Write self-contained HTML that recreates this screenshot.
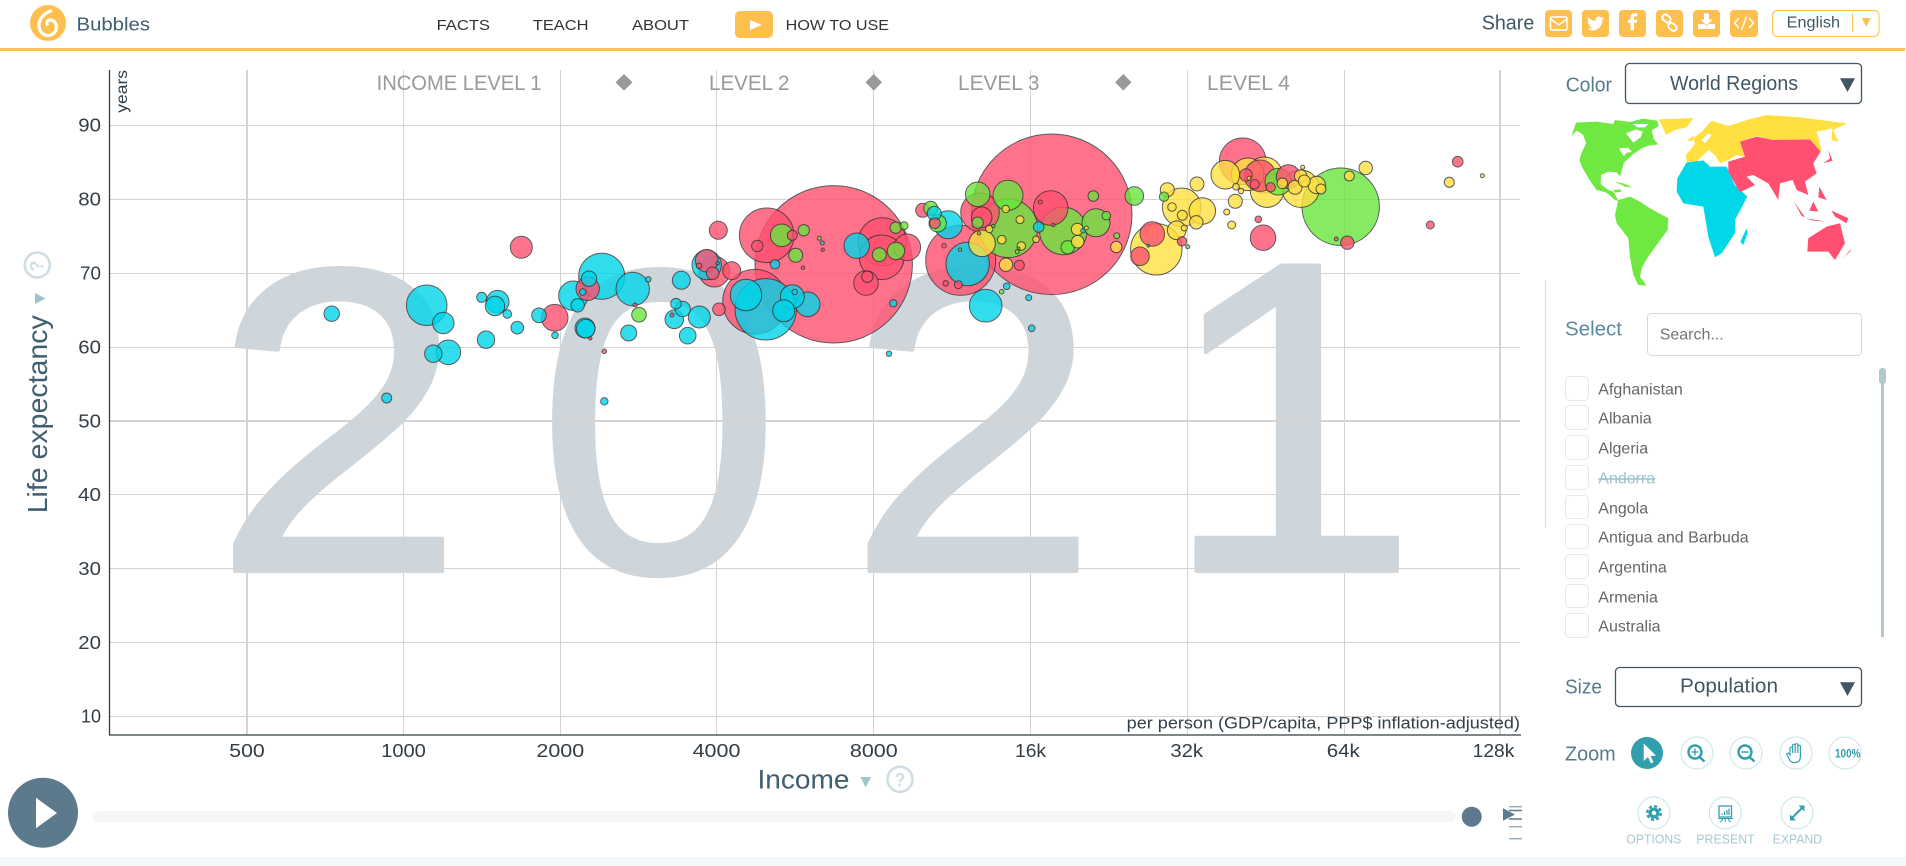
<!DOCTYPE html>
<html lang="en"><head><meta charset="utf-8"><title>Bubbles</title>
<style>
html,body{margin:0;padding:0;background:#fff;width:1906px;height:866px;overflow:hidden}
svg{display:block;font-family:"Liberation Sans",sans-serif}
.gl{stroke:#d3d3d3;stroke-width:1;shape-rendering:crispEdges}
.tk{font-size:18px;fill:#333d45}
.p{fill:#ff5070}.c{fill:#00d5e9}.g{fill:#68e63c}.y{fill:#ffe040}
#b circle{opacity:.8;stroke:#333;stroke-width:1}
.lv{font-size:21px;fill:#999}
.nav{font-size:15px;fill:#333}
.lb{font-size:20px;fill:#567b8e}
.it{font-size:16px;fill:#666}
.cb{fill:#fff;stroke:#e2e9ed;stroke-width:1}
.btn{fill:#fff;stroke:#c5e4ea;stroke-width:1}
.bl{font-size:13px;fill:#a6c8d2}
.ti{fill:none;stroke:#329fad;stroke-width:2.4}
.sh{fill:#fdc04f}
</style></head><body>
<svg width="1906" height="866" viewBox="0 0 1906 866" xmlns="http://www.w3.org/2000/svg">
<rect width="1906" height="866" fill="#fff"/>
<rect y="857" width="1906" height="9" fill="#f3f7fa"/>

<!-- header -->
<circle cx="48" cy="23" r="18" fill="#fdc04f"/>
<path d="M52 10.5C44 13 39 19 39 25.5C39 32 44 35.5 48 35.5C53 35.5 56.5 31.5 56.5 27C56.5 23 53.5 20 50.5 20C47.5 20 46 23 47.5 25.5" fill="none" stroke="#fff" stroke-width="3.200"/>
<text x="76.500" y="30.500" font-size="18" fill="#3f5e70" textLength="73.500" lengthAdjust="spacingAndGlyphs">Bubbles</text>
<text class="nav" x="436.600" y="30" textLength="53.400" lengthAdjust="spacingAndGlyphs">FACTS</text>
<text class="nav" x="532.800" y="30" textLength="55.700" lengthAdjust="spacingAndGlyphs">TEACH</text>
<text class="nav" x="632" y="30" textLength="57" lengthAdjust="spacingAndGlyphs">ABOUT</text>
<rect x="735" y="11" width="38" height="27" rx="5" class="sh"/>
<path d="M750 20L762 25L750 30Z" fill="#fff"/>
<text class="nav" x="785.700" y="30" textLength="103.300" lengthAdjust="spacingAndGlyphs">HOW TO USE</text>
<rect y="48" width="1905" height="3" fill="#fdc04f"/>

<text x="1481.700" y="29.300" font-size="20" fill="#3f5764" textLength="52.600" lengthAdjust="spacingAndGlyphs">Share</text>
<rect x="1545" y="10" width="27" height="27" rx="4" class="sh"/>
<rect x="1550.500" y="17" width="16.500" height="13" rx="1.500" fill="none" stroke="#fff" stroke-width="1.500"/>
<path d="M1550.500 19L1558.700 25L1567 19" fill="none" stroke="#fff" stroke-width="1.500"/>
<rect x="1582" y="10" width="27" height="27" rx="4" class="sh"/>
<path transform="translate(1587 15) scale(.71)" fill="#fff" d="M23.953 4.57a10 10 0 01-2.825.775 4.958 4.958 0 002.163-2.723c-.951.555-2.005.959-3.127 1.184a4.92 4.92 0 00-8.384 4.482C7.69 8.095 4.067 6.13 1.64 3.162a4.822 4.822 0 00-.666 2.475c0 1.71.87 3.213 2.188 4.096a4.904 4.904 0 01-2.228-.616v.06a4.923 4.923 0 003.946 4.827 4.996 4.996 0 01-2.212.085 4.936 4.936 0 004.604 3.417 9.867 9.867 0 01-6.102 2.105c-.39 0-.779-.023-1.17-.067a13.995 13.995 0 007.557 2.209c9.053 0 13.998-7.496 13.998-13.985 0-.21 0-.42-.015-.63A9.935 9.935 0 0024 4.59z"/>
<rect x="1619" y="10" width="27" height="27" rx="4" class="sh"/>
<path transform="translate(0 -1.800)" fill="#fff" d="M1634 32V24.500h2.700l.5-3h-3.200v-2c0-1 .4-1.500 1.600-1.500h1.700v-3h-2.500c-2.800 0-4.300 1.700-4.300 4.300v2.200h-2.500v3h2.500V32z"/>
<rect x="1656" y="10" width="27" height="27" rx="4" class="sh"/>
<g fill="none" stroke="#fff" stroke-width="2"><rect x="1662" y="15.500" width="9" height="6" rx="3" transform="rotate(40 1666.500 18.500)"/><rect x="1668" y="24" width="9" height="6" rx="3" transform="rotate(40 1672.500 27)"/></g>
<rect x="1693" y="10" width="27" height="27" rx="4" class="sh"/>
<path d="M1704 13.500h5v6h3.500l-6 6-6-6h3.500z" fill="#fff"/><path d="M1698 24h6l2.500 2.500 2.500-2.500h6v5h-17z" fill="#fff"/>
<rect x="1730" y="10" width="28" height="27" rx="4" class="sh"/>
<path d="M1739 18l-4.500 5 4.500 5M1749 18l4.500 5-4.500 5M1746.500 16.500l-5 13.500" fill="none" stroke="#fff" stroke-width="1.400"/>
<rect x="1772.500" y="10.500" width="106.500" height="26" rx="5" fill="#fff" stroke="#fdc04f" stroke-width="1"/>
<text x="1786.700" y="27.300" font-size="16" fill="#3f5764" textLength="53.300" lengthAdjust="spacingAndGlyphs">English</text>
<rect x="1852" y="13.500" width="1" height="18" fill="#fdc04f"/>
<path d="M1861.700 18H1870.700L1866.200 26.700Z" fill="#fdc04f"/>

<!-- year -->
<g font-size="434" fill="#ced6db" stroke="#ced6db" stroke-width="4" stroke-linejoin="round">
<text transform="translate(212.300 571) scale(1.046 1)">2</text>
<text transform="translate(537 572) scale(1.01 1)">0</text>
<text transform="translate(846.800 571) scale(1.046 1)">2</text>
<text transform="translate(1161.200 571) scale(1.07 1.023)">1</text>
</g>

<!-- grid -->
<g class="gl">
<line x1="247" y1="70" x2="247" y2="735" stroke-width="2"/><line x1="403.500" y1="70" x2="403.500" y2="735"/><line x1="560.500" y1="70" x2="560.500" y2="735"/><line x1="716.500" y1="70" x2="716.500" y2="735"/><line x1="873.500" y1="70" x2="873.500" y2="735"/><line x1="1030.500" y1="70" x2="1030.500" y2="735"/><line x1="1187.500" y1="70" x2="1187.500" y2="735"/><line x1="1344.500" y1="70" x2="1344.500" y2="735"/><line x1="1500" y1="70" x2="1500" y2="735" stroke-width="2"/>
<line x1="110" y1="125.500" x2="1520" y2="125.500"/><line x1="110" y1="199.500" x2="1520" y2="199.500"/><line x1="110" y1="273.500" x2="1520" y2="273.500"/><line x1="110" y1="347.500" x2="1520" y2="347.500"/><line x1="110" y1="421" x2="1520" y2="421" stroke-width="2"/><line x1="110" y1="494.500" x2="1520" y2="494.500"/><line x1="110" y1="568.500" x2="1520" y2="568.500"/><line x1="110" y1="642.500" x2="1520" y2="642.500"/><line x1="110" y1="716.500" x2="1520" y2="716.500"/>
</g>
<path d="M109.500 70V735H1521" fill="none" stroke="#333d45" stroke-width="1.300"/>

<!-- income levels -->
<text class="lv" x="376.600" y="90" textLength="164.900" lengthAdjust="spacingAndGlyphs">INCOME LEVEL 1</text>
<text class="lv" x="709" y="90" textLength="80.500" lengthAdjust="spacingAndGlyphs">LEVEL 2</text>
<text class="lv" x="958" y="90" textLength="81.500" lengthAdjust="spacingAndGlyphs">LEVEL 3</text>
<text class="lv" x="1207" y="90" textLength="83" lengthAdjust="spacingAndGlyphs">LEVEL 4</text>
<path d="M624 74L632.500 82.300L624 90.600L615.500 82.300ZM873.800 74L882 82.300L873.800 90.600L865.500 82.300ZM1123.300 74L1131.500 82.300L1123.300 90.600L1115 82.300Z" fill="#999"/>

<!-- ticks -->
<g class="tk" text-anchor="end">
<text x="101" y="131.700" textLength="22.700" lengthAdjust="spacingAndGlyphs">90</text><text x="101" y="205.700" textLength="22.700" lengthAdjust="spacingAndGlyphs">80</text><text x="101" y="279.700" textLength="21" lengthAdjust="spacingAndGlyphs">70</text><text x="101" y="353.700" textLength="22.700" lengthAdjust="spacingAndGlyphs">60</text><text x="101" y="427.400" textLength="22.700" lengthAdjust="spacingAndGlyphs">50</text><text x="101" y="501" textLength="23" lengthAdjust="spacingAndGlyphs">40</text><text x="101" y="575" textLength="22.700" lengthAdjust="spacingAndGlyphs">30</text><text x="101" y="649" textLength="22.700" lengthAdjust="spacingAndGlyphs">20</text><text x="101" y="722.500" textLength="20" lengthAdjust="spacingAndGlyphs">10</text>
</g>
<g class="tk" text-anchor="middle">
<text x="247" y="757" textLength="35.500" lengthAdjust="spacingAndGlyphs">500</text><text x="403.500" y="757" textLength="44.700" lengthAdjust="spacingAndGlyphs">1000</text><text x="560.300" y="757" textLength="47.800" lengthAdjust="spacingAndGlyphs">2000</text><text x="716.500" y="757" textLength="47.800" lengthAdjust="spacingAndGlyphs">4000</text><text x="873.800" y="757" textLength="47.800" lengthAdjust="spacingAndGlyphs">8000</text><text x="1030.500" y="757" textLength="31" lengthAdjust="spacingAndGlyphs">16k</text><text x="1186.700" y="757" textLength="32.700" lengthAdjust="spacingAndGlyphs">32k</text><text x="1343.300" y="757" textLength="33" lengthAdjust="spacingAndGlyphs">64k</text><text x="1493.500" y="757" textLength="41.700" lengthAdjust="spacingAndGlyphs">128k</text>
</g>
<text x="1126.700" y="728.300" font-size="17" fill="#333d45" textLength="393.300" lengthAdjust="spacingAndGlyphs">per person (GDP/capita, PPP$ inflation-adjusted)</text>
<text transform="translate(127 112.700) rotate(-90)" font-size="16" fill="#333d45" textLength="42.700" lengthAdjust="spacingAndGlyphs">years</text>

<text transform="translate(47 513.300) rotate(-90)" font-size="28" fill="#3f5e70" textLength="198" lengthAdjust="spacingAndGlyphs">Life expectancy</text>
<path d="M35 293L45.700 298.500L35 304Z" fill="#9fc4cc"/>
<circle cx="37.300" cy="265" r="12.500" fill="none" stroke="#d0dde3" stroke-width="2.600"/>
<text transform="translate(43 271.500) rotate(-90)" font-size="18" font-weight="bold" fill="#d0dde3" text-anchor="start">?</text>

<text x="757.500" y="788.300" font-size="27" fill="#3f5e70" textLength="92" lengthAdjust="spacingAndGlyphs">Income</text>
<path d="M860.400 777H871L865.700 787.500Z" fill="#9fc4cc"/>
<circle cx="900" cy="779.300" r="12.500" fill="none" stroke="#d0dde3" stroke-width="2.600"/>
<text x="900" y="786" font-size="18" font-weight="bold" fill="#d0dde3" text-anchor="middle">?</text>

<!-- bubbles -->
<g id="b">
<circle class="p" cx="1051.700" cy="214.300" r="80.300"/>
<circle class="p" cx="833.700" cy="264.300" r="78.700"/>
<circle class="g" cx="1340.700" cy="206.700" r="38.700"/>
<circle class="p" cx="960.700" cy="260.300" r="35"/>
<circle class="p" cx="755" cy="301.700" r="32.300"/>
<circle class="c" cx="765.700" cy="309.300" r="30.700"/>
<circle class="g" cx="1008.300" cy="228.300" r="29.300"/>
<circle class="p" cx="766.700" cy="235.300" r="27.300"/>
<circle class="y" cx="1156.300" cy="249.300" r="25.700"/>
<circle class="p" cx="882.300" cy="241.700" r="24"/>
<circle class="g" cx="1063.300" cy="231" r="23.700"/>
<circle class="p" cx="1242.700" cy="161.300" r="23.300"/>
<circle class="c" cx="601.700" cy="276.300" r="23"/>
<circle class="p" cx="881.700" cy="257.300" r="22.300"/>
<circle class="c" cx="967.700" cy="264" r="21.700"/>
<circle class="c" cx="426.700" cy="305.300" r="20.300"/>
<circle class="p" cx="980" cy="212.300" r="19.300"/>
<circle class="y" cx="1181.700" cy="207.300" r="19.300"/>
<circle class="y" cx="1300.700" cy="188.700" r="18.700"/>
<circle class="y" cx="1264.300" cy="175" r="18"/>
<circle class="p" cx="1050.700" cy="208" r="17.300"/>
<circle class="c" cx="632.700" cy="289" r="16.700"/>
<circle class="y" cx="1267" cy="190.700" r="16.700"/>
<circle class="c" cx="985.700" cy="305.700" r="16.300"/>
<circle class="y" cx="1247.700" cy="174.300" r="16.300"/>
<circle class="c" cx="746" cy="295" r="15.700"/>
<circle class="p" cx="1260" cy="175.700" r="15.700"/>
<circle class="p" cx="714.300" cy="271.700" r="15.300"/>
<circle class="g" cx="1008" cy="195.300" r="15"/>
<circle class="c" cx="573.300" cy="295.700" r="14.700"/>
<circle class="c" cx="706.700" cy="265" r="14.700"/>
<circle class="y" cx="1225.300" cy="174.700" r="14.300"/>
<circle class="c" cx="948.300" cy="224.700" r="14"/>
<circle class="g" cx="1096" cy="222.700" r="14"/>
<circle class="p" cx="907.300" cy="247.300" r="13.300"/>
<circle class="p" cx="554.700" cy="317.700" r="13.300"/>
<circle class="y" cx="982" cy="243.300" r="13.300"/>
<circle class="y" cx="1202.300" cy="211" r="13.300"/>
<circle class="g" cx="1278.300" cy="181.700" r="13.300"/>
<circle class="c" cx="856.700" cy="245.700" r="12.700"/>
<circle class="p" cx="1263" cy="237.700" r="12.700"/>
<circle class="c" cx="448.300" cy="352.300" r="12.300"/>
<circle class="c" cx="807.700" cy="304.300" r="12.300"/>
<circle class="p" cx="866" cy="283" r="12.300"/>
<circle class="g" cx="977.700" cy="194.300" r="12.300"/>
<circle class="p" cx="1152.300" cy="234" r="12.300"/>
<circle class="c" cx="792.300" cy="296.700" r="12"/>
<circle class="p" cx="1288.300" cy="176.700" r="12"/>
<circle class="p" cx="587.700" cy="288.700" r="11.700"/>
<circle class="c" cx="497.700" cy="301.700" r="11.300"/>
<circle class="p" cx="706.700" cy="260.700" r="11.300"/>
<circle class="g" cx="781.700" cy="235.300" r="11.300"/>
<circle class="p" cx="521.300" cy="247.300" r="11"/>
<circle class="c" cx="699.300" cy="317" r="11"/>
<circle class="c" cx="783.700" cy="310.700" r="11"/>
<circle class="c" cx="443.300" cy="323" r="10.700"/>
<circle class="p" cx="981.700" cy="217.300" r="10.300"/>
<circle class="c" cx="585" cy="328" r="10"/>
<circle class="c" cx="495" cy="306" r="9.700"/>
<circle class="c" cx="585.700" cy="328.700" r="9.300"/>
<circle class="c" cx="674.300" cy="319.300" r="9.300"/>
<circle class="y" cx="1176.700" cy="230.300" r="9.300"/>
<circle class="p" cx="1140" cy="256.300" r="9.300"/>
<circle class="g" cx="1134.300" cy="196" r="9.300"/>
<circle class="c" cx="681.300" cy="280.300" r="9"/>
<circle class="p" cx="718.300" cy="230.300" r="9"/>
<circle class="p" cx="731.700" cy="270.700" r="9"/>
<circle class="c" cx="433.300" cy="353.700" r="8.700"/>
<circle class="c" cx="486" cy="339.700" r="8.700"/>
<circle class="g" cx="896" cy="251" r="8.700"/>
<circle class="g" cx="937.700" cy="223.300" r="8.700"/>
<circle class="y" cx="1316.700" cy="185" r="8.700"/>
<circle class="c" cx="687.700" cy="335.700" r="8.300"/>
<circle class="c" cx="628.700" cy="333" r="8"/>
<circle class="c" cx="331.700" cy="313.700" r="7.700"/>
<circle class="c" cx="589" cy="278.700" r="7.700"/>
<circle class="c" cx="682.700" cy="309" r="7.700"/>
<circle class="c" cx="539" cy="315.300" r="7.300"/>
<circle class="g" cx="639" cy="314.700" r="7.300"/>
<circle class="p" cx="922.700" cy="210.300" r="7"/>
<circle class="g" cx="930.700" cy="208.300" r="7"/>
<circle class="c" cx="934.300" cy="213.300" r="7"/>
<circle class="g" cx="795.700" cy="255.300" r="7"/>
<circle class="g" cx="879.300" cy="254.700" r="7"/>
<circle class="y" cx="1167.300" cy="189.700" r="7"/>
<circle class="y" cx="1197" cy="184" r="7"/>
<circle class="y" cx="1295" cy="187.300" r="7"/>
<circle class="y" cx="1235.300" cy="201.300" r="7"/>
<circle class="y" cx="1006" cy="264.700" r="6.700"/>
<circle class="c" cx="577.700" cy="305.300" r="6.700"/>
<circle class="g" cx="1067.700" cy="247.300" r="6.700"/>
<circle class="y" cx="1196.300" cy="222.300" r="6.700"/>
<circle class="y" cx="1365.700" cy="168" r="6.700"/>
<circle class="p" cx="1347.300" cy="242.700" r="6.700"/>
<circle class="c" cx="517.300" cy="327.700" r="6.300"/>
<circle class="p" cx="719" cy="309.300" r="6.300"/>
<circle class="p" cx="712.700" cy="273.300" r="6.300"/>
<circle class="p" cx="1246" cy="175" r="6.300"/>
<circle class="y" cx="1077.700" cy="241.700" r="6.300"/>
<circle class="y" cx="1300.700" cy="176" r="6.300"/>
<circle class="y" cx="1077.300" cy="229.300" r="6"/>
<circle class="y" cx="1304.300" cy="181" r="6"/>
<circle class="g" cx="803.700" cy="230.300" r="5.700"/>
<circle class="p" cx="757.300" cy="246" r="5.700"/>
<circle class="g" cx="895.700" cy="227.700" r="5.700"/>
<circle class="p" cx="867.300" cy="276.700" r="5.700"/>
<circle class="g" cx="977.700" cy="222.700" r="5.700"/>
<circle class="y" cx="1116.300" cy="247" r="5.700"/>
<circle class="c" cx="676" cy="303.700" r="5.300"/>
<circle class="p" cx="935" cy="223.300" r="5.300"/>
<circle class="c" cx="1038.700" cy="227" r="5.300"/>
<circle class="g" cx="1093.300" cy="196" r="5.300"/>
<circle class="y" cx="1282.300" cy="183.300" r="5.300"/>
<circle class="p" cx="1457.700" cy="161.700" r="5.300"/>
<circle class="c" cx="386.700" cy="398" r="5"/>
<circle class="c" cx="481.700" cy="297.300" r="5"/>
<circle class="p" cx="792.300" cy="235.300" r="5"/>
<circle class="p" cx="1019.300" cy="265.300" r="5"/>
<circle class="y" cx="1182.300" cy="215.300" r="5"/>
<circle class="y" cx="1321" cy="189" r="5"/>
<circle class="y" cx="1349.300" cy="176" r="5"/>
<circle class="y" cx="1449.300" cy="182.300" r="5"/>
<circle class="c" cx="775" cy="264.300" r="4.700"/>
<circle class="g" cx="1164" cy="196.700" r="4.700"/>
<circle class="p" cx="1182" cy="241.300" r="4.700"/>
<circle class="p" cx="1254.700" cy="184.300" r="4.700"/>
<circle class="p" cx="1270.700" cy="187.300" r="4.700"/>
<circle class="c" cx="507.300" cy="314" r="4.300"/>
<circle class="y" cx="1001.700" cy="239.700" r="4.300"/>
<circle class="y" cx="1021.300" cy="246" r="4.300"/>
<circle class="g" cx="1106.300" cy="215.700" r="4.300"/>
<circle class="y" cx="1172" cy="207" r="4.300"/>
<circle class="g" cx="904" cy="225.700" r="4"/>
<circle class="p" cx="958.300" cy="284.700" r="4"/>
<circle class="y" cx="1020" cy="219.700" r="4"/>
<circle class="y" cx="1231.700" cy="225" r="4"/>
<circle class="p" cx="1430.300" cy="225" r="4"/>
<circle class="c" cx="604.300" cy="401.300" r="3.700"/>
<circle class="c" cx="893.300" cy="303.300" r="3.700"/>
<circle class="y" cx="1005.700" cy="209" r="3.700"/>
<circle class="y" cx="989.300" cy="229" r="3.700"/>
<circle class="c" cx="555" cy="335.300" r="3.300"/>
<circle class="c" cx="582.700" cy="292" r="3.300"/>
<circle class="c" cx="1006.700" cy="286.300" r="3.300"/>
<circle class="c" cx="1031.700" cy="328.300" r="3.300"/>
<circle class="y" cx="1036" cy="239.300" r="3.300"/>
<circle class="y" cx="1236" cy="186.700" r="3.300"/>
<circle class="p" cx="1258.300" cy="219.300" r="3.300"/>
<circle class="c" cx="1028.700" cy="297.700" r="3"/>
<circle class="g" cx="1116.700" cy="235.700" r="3"/>
<circle class="y" cx="1184.300" cy="228" r="3"/>
<circle class="y" cx="1226.700" cy="212" r="3"/>
<circle class="c" cx="648.300" cy="279.300" r="2.700"/>
<circle class="p" cx="699" cy="265.700" r="2.700"/>
<circle class="c" cx="794.700" cy="292" r="2.700"/>
<circle class="c" cx="889" cy="353.700" r="2.700"/>
<circle class="p" cx="945.700" cy="283.300" r="2.700"/>
<circle class="y" cx="1241" cy="191" r="2.700"/>
<circle class="p" cx="604.300" cy="351.300" r="2.300"/>
<circle class="p" cx="944" cy="245.700" r="2.300"/>
<circle class="g" cx="1001.700" cy="291.700" r="2.300"/>
<circle class="c" cx="1083" cy="230.700" r="2.300"/>
<circle class="p" cx="635" cy="305" r="2"/>
<circle class="p" cx="672" cy="315" r="2"/>
<circle class="g" cx="819.300" cy="238.300" r="2"/>
<circle class="c" cx="822.300" cy="243" r="2"/>
<circle class="g" cx="1017.300" cy="251.700" r="2"/>
<circle class="p" cx="1040.300" cy="202" r="2"/>
<circle class="y" cx="1086.300" cy="228" r="2"/>
<circle class="g" cx="1187.700" cy="246.700" r="2"/>
<circle class="y" cx="1249" cy="178.300" r="2"/>
<circle class="y" cx="1302.700" cy="167.300" r="2"/>
<circle class="p" cx="1336.300" cy="239" r="2"/>
<circle class="y" cx="1482.300" cy="175.700" r="2"/>
<circle class="p" cx="590.300" cy="338.300" r="1.700"/>
<circle class="c" cx="717.700" cy="263.300" r="1.700"/>
<circle class="p" cx="803" cy="267.700" r="1.700"/>
<circle class="p" cx="822.700" cy="249.700" r="1.700"/>
<circle class="g" cx="960" cy="249.700" r="1.700"/>
<circle class="g" cx="993.300" cy="226" r="1.700"/>
<circle class="g" cx="979" cy="233.300" r="1.700"/>
<circle class="p" cx="1053.300" cy="225" r="1.700"/>
<circle class="g" cx="1018.700" cy="248.300" r="1.300"/>
<circle class="c" cx="1148.300" cy="245.700" r="1.300"/>
</g>

<!-- timeline -->
<circle cx="43" cy="812.700" r="35" fill="#5c7a8b"/>
<path d="M36 797.700L57 813L36 828.300Z" fill="#fff"/>
<rect x="92" y="811" width="1364" height="11" rx="5.500" fill="#f4f6f8"/>
<circle cx="1471.700" cy="816.700" r="13" fill="#fff"/>
<circle cx="1471.700" cy="816.700" r="10" fill="#5c7a8b"/>
<g stroke="#9fb0ba" stroke-width="1.500"><line x1="1509" y1="806.700" x2="1522" y2="806.700"/><line x1="1509" y1="810.500" x2="1522" y2="810.500" stroke="#5c7a8b"/><line x1="1509" y1="819" x2="1522" y2="819" stroke="#5c7a8b"/><line x1="1509" y1="826.700" x2="1522" y2="826.700"/><line x1="1509" y1="838.700" x2="1522" y2="838.700"/></g>
<path d="M1503 808.300L1515 814.500L1503 820.700Z" fill="#5c7a8b"/>

<!-- color -->
<text class="lb" x="1565.700" y="91.700" textLength="46.300" lengthAdjust="spacingAndGlyphs">Color</text>
<rect x="1625.500" y="63.500" width="236" height="40" rx="4" fill="#fff" stroke="#3f5764" stroke-width="1.300"/>
<text x="1670" y="90" font-size="20" fill="#3f5764" textLength="128" lengthAdjust="spacingAndGlyphs">World Regions</text>
<path d="M1840 78.300H1855L1847.500 92Z" fill="#3f5764"/>

<!-- world map -->
<g transform="translate(1400 0) scale(.3333)">
<path fill="#6fe841" d="M515 408L528 368L590 365L640 372L645 360L690 366L728 356L772 362L776 378L755 392L762 418L775 433L745 437L725 445L700 462L672 488L660 530L650 517L625 515L603 525L602 552L625 570L640 575L656 603L645 600L620 578L590 570L572 545L548 505L538 480L545 458L558 430L550 405L530 392Z"/>
<path fill="#fff" d="M678 400L708 388L728 395L722 412L700 428ZM700 372L745 372L735 382L712 382ZM658 445L685 443L695 456L680 458L672 468L665 460Z"/>
<path fill="#6fe841" d="M645 545L670 550L698 562L675 560ZM640 570L660 568L665 575L645 578ZM655 600L690 590L720 605L750 625L805 655L803 690L770 735L745 770L727 800L720 830L740 857L715 855L700 825L690 770L685 715L650 670L645 645Z"/>
<path fill="#ffe040" d="M775 358L880 354L860 382L825 390L798 405L785 375ZM860 485L858 465L885 432L880 415L905 395L935 362L985 378L1040 360L1100 345L1200 352L1340 370L1300 390L1315 425L1295 420L1297 385L1250 395L1265 450L1255 455L1230 417L1120 420L1070 408L1020 425L1035 470L1010 465L985 480L960 490L945 465L925 450L890 485ZM862 420L885 405L875 425Z"/>
<path fill="#fff" d="M905 420L925 400L935 405L915 430Z"/>
<path fill="#00d8e8" d="M860 487L910 481L930 500L980 500L1005 555L1042 590L1005 660L1005 700L965 760L945 772L925 710L910 620L850 610L830 575L832 535ZM1040 685L1043 700L1030 735L1021 725Z"/>
<path fill="#ff5072" d="M1020 425L1070 410L1120 420L1230 418L1262 455L1240 490L1250 520L1215 545L1225 585L1190 570L1178 540L1140 550L1135 600L1105 550L1060 525L1040 530L1065 555L1020 577L985 515L985 485L1035 470ZM1285 450L1298 482L1270 490L1290 475ZM1182 605L1215 652L1205 648ZM1215 655L1280 665L1240 662ZM1240 605L1255 635L1228 632ZM1258 560L1280 600L1255 592ZM1295 632L1345 655L1340 670L1305 650ZM1280 680L1320 670L1335 730L1305 780L1285 755L1222 755L1225 715ZM1355 745L1330 775L1350 755Z"/>
</g>

<!-- select -->
<rect x="1545" y="280" width="1" height="248" fill="#cfe0e6"/>
<text x="1565" y="335.700" font-size="20" fill="#5a8aa5" textLength="57" lengthAdjust="spacingAndGlyphs">Select</text>
<rect x="1647.500" y="313.500" width="214" height="42" rx="4" fill="#fff" stroke="#d8d8d8"/>
<text x="1659.700" y="339.300" font-size="16" fill="#757575">Search...</text>
<g>
<rect class="cb" x="1565.500" y="376.500" width="23" height="24" rx="4"/><text class="it" x="1598.300" y="394.300">Afghanistan</text>
<rect class="cb" x="1565.500" y="405.500" width="23" height="24" rx="4"/><text class="it" x="1598.300" y="423.300">Albania</text>
<rect class="cb" x="1565.500" y="435.500" width="23" height="24" rx="4"/><text class="it" x="1598.300" y="453.300">Algeria</text>
<rect class="cb" x="1565.500" y="465.500" width="23" height="24" rx="4"/><text class="it" x="1598.300" y="483.300" style="fill:#9fc4cc;text-decoration:line-through">Andorra</text>
<rect class="cb" x="1565.500" y="495.500" width="23" height="23" rx="4"/><text class="it" x="1598.300" y="513.300">Angola</text>
<rect class="cb" x="1565.500" y="524.500" width="23" height="24" rx="4"/><text class="it" x="1598.300" y="542.300">Antigua and Barbuda</text>
<rect class="cb" x="1565.500" y="554.500" width="23" height="24" rx="4"/><text class="it" x="1598.300" y="572.300">Argentina</text>
<rect class="cb" x="1565.500" y="584.500" width="23" height="23" rx="4"/><text class="it" x="1598.300" y="602.300">Armenia</text>
<rect class="cb" x="1565.500" y="613.500" width="23" height="24" rx="4"/><text class="it" x="1598.300" y="631.300">Australia</text>
</g>
<rect x="1881" y="372" width="3" height="265" fill="#b5c7ce"/>
<rect x="1879" y="368" width="7" height="16" rx="3" fill="#b5c7ce"/>
<rect x="1905" y="0" width="1" height="866" fill="#f7f9fb"/>

<!-- size -->
<text class="lb" x="1565" y="693.700" textLength="37" lengthAdjust="spacingAndGlyphs">Size</text>
<rect x="1615.500" y="667.500" width="246" height="39" rx="4" fill="#fff" stroke="#3f5764" stroke-width="1.300"/>
<text x="1680" y="692.700" font-size="20" fill="#3f5764" textLength="98" lengthAdjust="spacingAndGlyphs">Population</text>
<path d="M1840 682.300H1855L1847.500 696Z" fill="#3f5764"/>

<!-- zoom -->
<text class="lb" x="1565" y="760.300" textLength="50.700" lengthAdjust="spacingAndGlyphs">Zoom</text>
<circle cx="1647" cy="753" r="16" fill="#329fad"/>
<path d="M1643.700 743.500V761L1648 757L1651 763.500L1653.500 762L1650.500 756L1656 755.500Z" fill="#fff"/>
<circle class="btn" cx="1697" cy="753" r="16"/>
<circle class="ti" cx="1695" cy="752" r="6.500"/><path class="ti" d="M1699.500 757L1704.500 761.500" stroke-width="3"/><path d="M1691.500 752H1698.500M1695 748.500V755.500" stroke="#329fad" stroke-width="1.300"/>
<circle class="btn" cx="1746" cy="753" r="16"/>
<circle class="ti" cx="1745" cy="752" r="6.500"/><path class="ti" d="M1749.500 757L1754.500 761.500" stroke-width="3"/><path d="M1741.500 752H1748.500" stroke="#329fad" stroke-width="1.500"/>
<circle class="btn" cx="1796" cy="753" r="16"/>
<path d="M1790 755V748.500a1.300 1.300 0 0 1 2.600 0V745.500a1.300 1.300 0 0 1 2.600 0V745a1.300 1.300 0 0 1 2.600 0V746.500a1.300 1.300 0 0 1 2.600 0V756C1800.400 760.500 1798.500 762.500 1795.500 762.500H1794C1791.500 762.500 1790.500 761.500 1789.500 759.500L1787 755C1786.200 753.500 1788 752.500 1789 753.500ZM1792.600 748.500V753M1795.200 745.500V753M1797.800 745.500V753" fill="none" stroke="#329fad" stroke-width="1.200"/>
<circle class="btn" cx="1845" cy="753" r="16"/>
<text x="1835" y="757.700" font-size="12" font-weight="bold" fill="#329fad" textLength="25.500" lengthAdjust="spacingAndGlyphs">100%</text>

<!-- bottom buttons -->
<circle class="btn" cx="1654" cy="813" r="16"/>
<circle cx="1654" cy="813" r="5.500" fill="#329fad"/><circle cx="1654" cy="813" r="6.800" fill="none" stroke="#329fad" stroke-width="2.400" stroke-dasharray="3 2.340"/><circle cx="1654" cy="813" r="2.200" fill="#fff"/>
<circle class="btn" cx="1725.300" cy="813" r="16"/>
<rect x="1719" y="806" width="12.500" height="11" fill="none" stroke="#329fad" stroke-width="1.300"/><path d="M1722 815V813.500M1724.500 815V811.500M1727 815V810M1729 815V808.500" stroke="#329fad" stroke-width="1.200"/><path d="M1718 818.500H1733M1723 819L1720.500 822M1725.300 819V822M1728 819L1730.500 822" stroke="#329fad" stroke-width="1"/>
<circle class="btn" cx="1797" cy="813" r="16"/>
<path d="M1791 819L1803 807" stroke="#329fad" stroke-width="2"/><path d="M1790 814.500V820.500H1796ZM1804.500 811.500V805.500H1798.500Z" fill="#329fad"/>
<text class="bl" x="1626.300" y="843.300" textLength="55" lengthAdjust="spacingAndGlyphs">OPTIONS</text>
<text class="bl" x="1696.300" y="843.300" textLength="58.400" lengthAdjust="spacingAndGlyphs">PRESENT</text>
<text class="bl" x="1772.700" y="843.300" textLength="49.300" lengthAdjust="spacingAndGlyphs">EXPAND</text>
</svg>
</body></html>
